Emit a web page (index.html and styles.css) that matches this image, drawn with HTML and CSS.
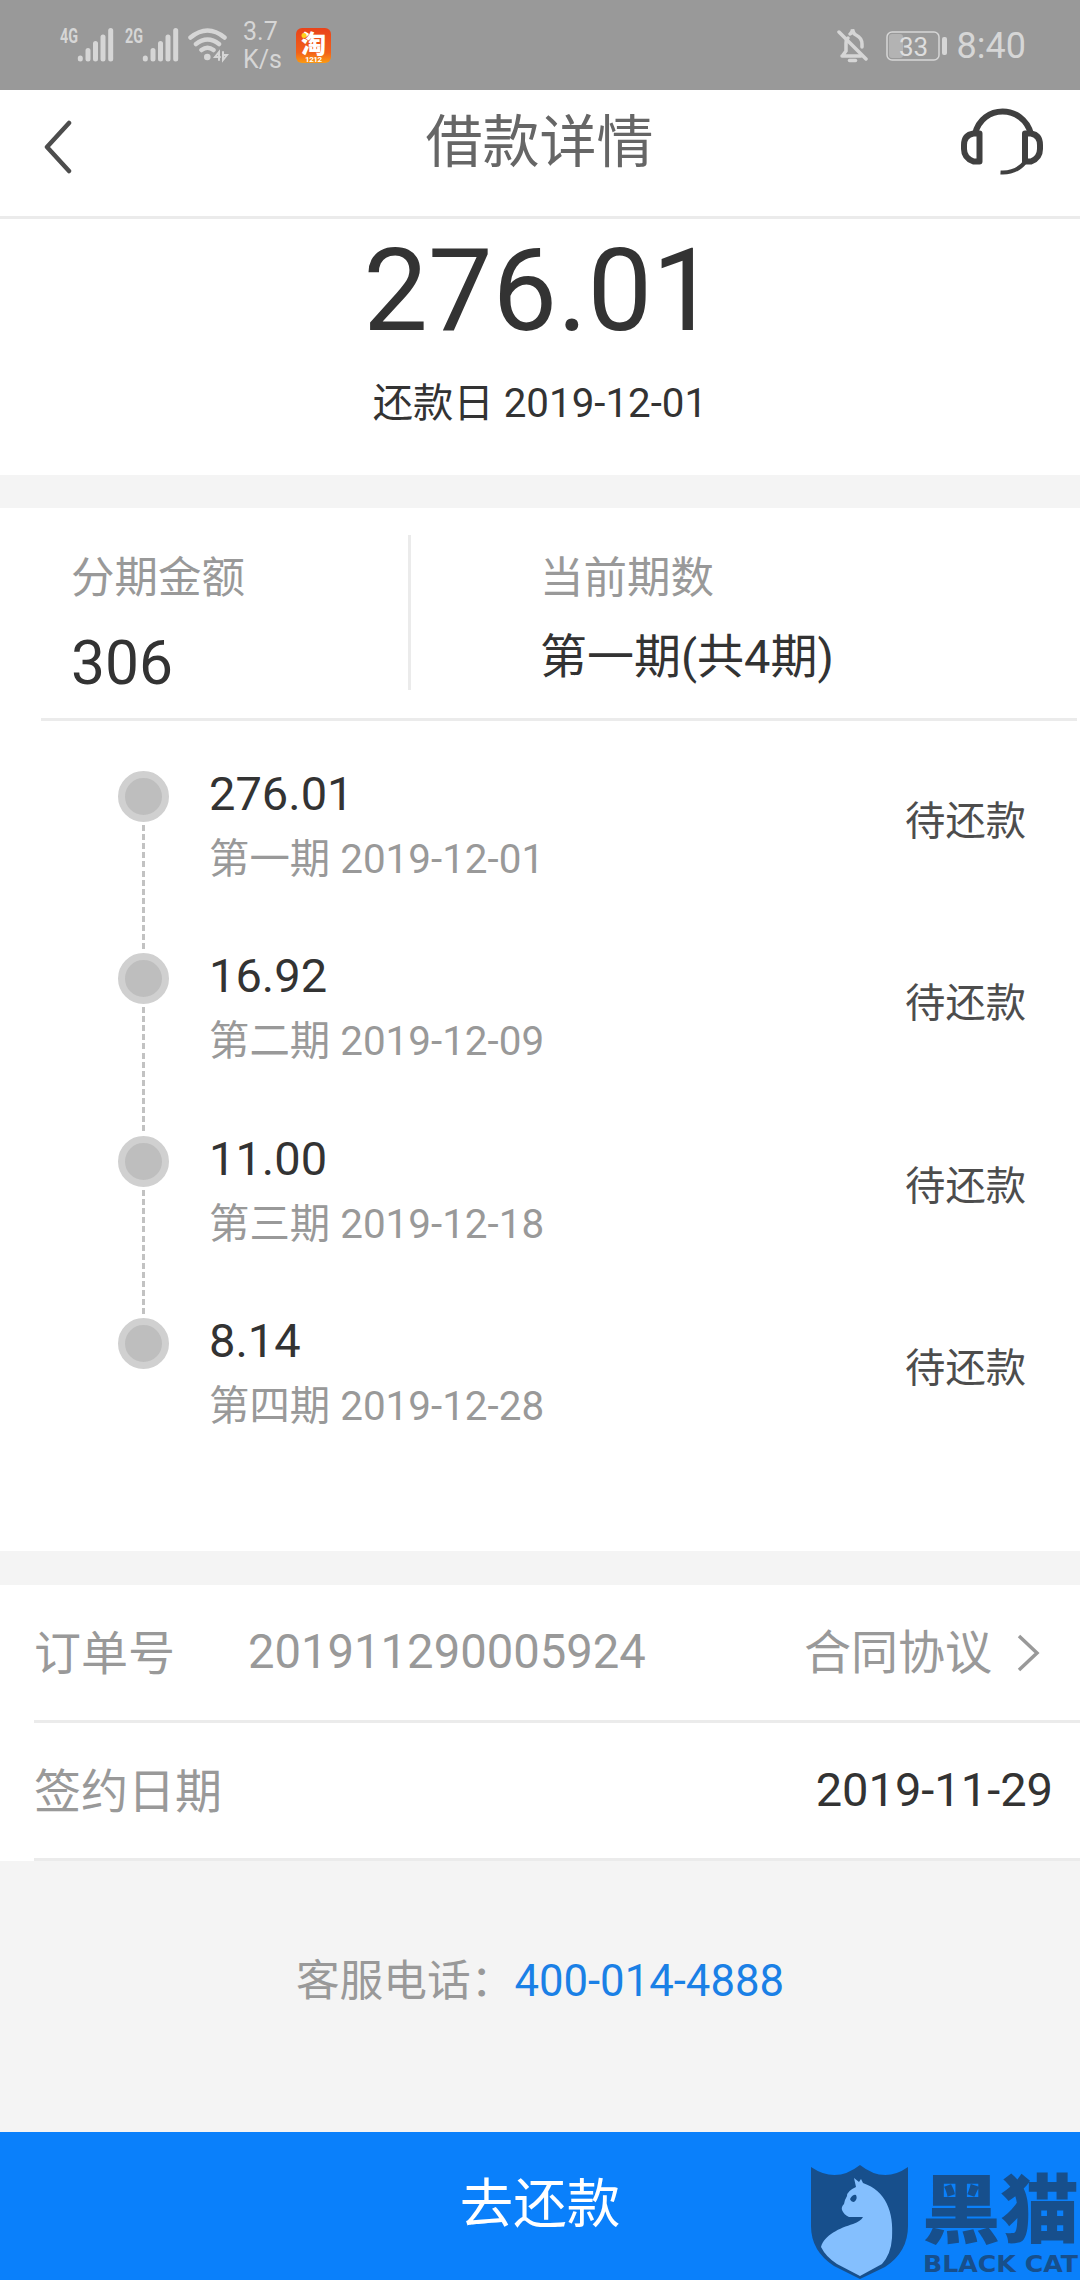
FILE: index.html
```html
<!DOCTYPE html>
<html lang="zh-CN">
<head>
    <meta charset="UTF-8">
    <meta name="viewport" content="width=device-width, initial-scale=1.0">
    <title>借款详情</title>
    <link rel="stylesheet" href="styles.css">
</head>
<body>
    <div class="status-bar">
        <svg class="signal" width="57" height="40" viewBox="0 0 57 40">
            <text class="net" x="2" y="18" textLength="18" lengthAdjust="spacingAndGlyphs">4G</text>
            <path d="M22.3 33v1M30 25.5v8.500M37.500 18.500v15.500M45 12v22M52.700 5.500v28.500"/>
        </svg>
        <svg class="signal" width="57" height="40" viewBox="0 0 57 40">
            <text class="net" x="2" y="18" textLength="18" lengthAdjust="spacingAndGlyphs">2G</text>
            <path d="M22.3 33v1M30 25.5v8.500M37.500 18.500v15.500M45 12v22M52.700 5.500v28.500"/>
        </svg>
        <svg class="wifi" width="42" height="40" viewBox="0 0 42 40">
            <path d="M3.500 12.500Q20.500-1.500 37.500 12.500M9 19Q20.500 10 32 19M14.500 25Q20.500 20.500 26.500 25"/>
            <circle cx="20.300" cy="32" r="3.300"/>
            <path class="arrows" d="M32 35v-8l-4 5h5M36 27v8l4-5h-4"/>
        </svg>
        <div class="speed">3.7<br>K/s</div>
        <svg class="taobao" width="35" height="35" viewBox="0 0 35 35">
            <defs>
                <linearGradient id="tb" x1="0" y1="0" x2="0" y2="1">
                    <stop offset="0" stop-color="#e9431a"/>
                    <stop offset="0.7" stop-color="#f2601a"/>
                    <stop offset="1" stop-color="#fb9a12"/>
                </linearGradient>
            </defs>
            <rect width="35" height="35" rx="6" fill="url(#tb)"/>
            <text class="tb-name" x="5" y="24.500">淘</text>
            <circle cx="8" cy="7.500" r="2.500" fill="#ffd21e"/>
            <text class="tb-date" x="9" y="34" textLength="17">1212</text>
        </svg>
        <svg class="bell" width="32" height="36" viewBox="0 0 32 36">
            <path d="M5 28H24M6 27l3-4V15q0-3 2-5M13 6q2-1 2.500-4.500Q16.500 6 19 7q6 3 6 9v3" />
            <path d="M2 4L29 31"/>
            <path d="M12.500 32.500h6"/>
        </svg>
        <svg class="battery" width="62" height="30" viewBox="0 0 62 30">
            <rect class="level" x="3" y="3" width="14" height="24" rx="3"/>
            <rect class="case" x="1" y="1" width="52" height="28" rx="5"/>
            <rect class="nub" x="56" y="6" width="5" height="18" rx="2"/>
            <text x="27.500" y="24.500" text-anchor="middle">33</text>
        </svg>
        <div class="clock">8:40</div>
    </div>

    <header class="header">
        <svg class="back" width="30" height="54" viewBox="0 0 30 54">
            <path d="M27 3L5 27l22 24"/>
        </svg>
        <h1>借款详情</h1>
        <svg class="headset" width="82" height="68" viewBox="0 0 82 68">
            <path class="band" d="M14 27C21-3 62-3 70 27"/>
            <path d="M18.500 26.500h-6Q3 28 3 38v4q0 9 9.500 12.500h6z"/>
            <path d="M64 26.500h6Q79 28 79 38v4q0 9-9 12.500h-6z"/>
            <path class="mic" d="M39.500 65.500q16 1 25-11"/>
        </svg>
    </header>

    <section class="summary">
        <div class="total">276.01</div>
        <div class="due">还款日 2019-12-01</div>
    </section>

    <section class="plan">
        <div class="plan-head">
            <div class="plan-cell">
                <div class="label">分期金额</div>
                <div class="principal">306</div>
            </div>
            <div class="divider"></div>
            <div class="plan-cell">
                <div class="label">当前期数</div>
                <div class="term">第一期(共4期)</div>
            </div>
        </div>
        <ul class="timeline">
            <li>
                <div class="marker"><span class="dot"></span><span class="dash"></span></div>
                <div class="info">
                    <div class="money">276.01</div>
                    <div class="date">第一期 2019-12-01</div>
                </div>
                <div class="state">待还款</div>
            </li>
            <li>
                <div class="marker"><span class="dot"></span><span class="dash"></span></div>
                <div class="info">
                    <div class="money">16.92</div>
                    <div class="date">第二期 2019-12-09</div>
                </div>
                <div class="state">待还款</div>
            </li>
            <li>
                <div class="marker"><span class="dot"></span><span class="dash"></span></div>
                <div class="info">
                    <div class="money">11.00</div>
                    <div class="date">第三期 2019-12-18</div>
                </div>
                <div class="state">待还款</div>
            </li>
            <li>
                <div class="marker"><span class="dot"></span></div>
                <div class="info">
                    <div class="money">8.14</div>
                    <div class="date">第四期 2019-12-28</div>
                </div>
                <div class="state">待还款</div>
            </li>
        </ul>
    </section>

    <section class="order">
        <div class="row">
            <span class="key">订单号</span>
            <span class="number">201911290005924</span>
            <a class="contract">合同协议
                <svg width="24" height="40" viewBox="0 0 24 40"><path d="M2 3l18 17L2 37"/></svg>
            </a>
        </div>
        <div class="row">
            <span class="key">签约日期</span>
            <span class="value">2019-11-29</span>
        </div>
    </section>

    <div class="service">客服电话：<a class="phone">400-014-4888</a></div>

    <footer class="pay">
        去还款
        <svg class="watermark" width="270" height="118" viewBox="0 0 270 118">
            <path class="shield" d="M1 5Q26 22 50 3Q74 22 98 5V64Q98 90 75 105L50 117L24 104Q1 89 1 64Z"/>
            <path class="cat" d="M44 16l5 4 2-3 2 4C76 29 84 50 82 76Q81 92 72 102L50 114L27 102Q16 95 11 85C14 73 30 66 43 62Q51 59 53 55L39 55Q34 53 32 48Q31 45 34 42Q35 37 37 34Q37 29 46 25Z"/>
            <path class="shield" d="M40 37q3-5 6-4q2 4-2 7q-3 0-4-3z"/>
            <text class="wm-cn" x="112" y="75" textLength="157" lengthAdjust="spacingAndGlyphs">黑猫</text>
            <text class="wm-en" x="113" y="110" textLength="155" lengthAdjust="spacingAndGlyphs">BLACK CAT</text>
        </svg>
    </footer>
</body>
</html>
```
FILE: styles.css
```css
* { box-sizing: border-box; }
body {
    margin: 0;
    width: 1080px;
    height: 2280px;
    display: flex;
    flex-direction: column;
    background: #f4f4f4;
    color: #333;
    font-family: Roboto, "Noto Sans CJK SC", sans-serif;
    overflow: hidden;
}
svg { display: block; flex: none; fill: none; }

/* system status bar */
.status-bar {
    height: 90px;
    flex: none;
    display: flex;
    align-items: flex-start;
    padding: 25px 54px 0 58px;
    background: #999;
    color: #d6d6d6;
}
.signal { margin-right: 8px; }
.signal path { stroke: #d6d6d6; stroke-width: 5; stroke-linecap: round; }
.net { font: bold 20px Roboto, sans-serif; fill: #d6d6d6; }
.wifi { margin-left: -1px; }
.wifi path { stroke: #d6d6d6; stroke-width: 4.5; stroke-linecap: round; }
.wifi circle { fill: #d6d6d6; }
.wifi .arrows { stroke-width: 2; }
.speed {
    width: 53px;
    margin: -7px 0 0 14px;
    font-size: 25px;
    line-height: 28px;
}
.taobao { margin-top: 3px; }
.tb-name { font: 900 25px "Noto Sans CJK SC", sans-serif; fill: #fff; }
.tb-date { font: bold 8px Roboto, sans-serif; fill: #fff; }
.bell { margin: 3px 17px 0 auto; }
.bell path { stroke: #d6d6d6; stroke-width: 3.5; stroke-linecap: round; }
.battery { margin: 6px 9px 0 0; }
.battery .level { fill: #b3b3b3; }
.battery .case { stroke: #d6d6d6; stroke-width: 1.5; }
.battery .nub { fill: #d6d6d6; }
.battery text { font: 26px Roboto, sans-serif; fill: #dedede; }
.clock { font-size: 36px; line-height: 43px; }

.header {
    height: 129px;
    flex: none;
    display: flex;
    align-items: flex-start;
    justify-content: space-between;
    padding: 18px 37px 0 42px;
    background: #fff;
    border-bottom: 3px solid #ebebeb;
}
.back { margin: 12px 46px 0 0; }
.back path { stroke: #4d4d4d; stroke-width: 4.5; stroke-linecap: round; stroke-linejoin: round; }
.header h1 {
    margin: 0;
    font-size: 57px;
    font-weight: 400;
    line-height: 70px;
    color: #666;
}
.headset { margin-top: -1px; }
.headset path { stroke: #404040; stroke-width: 6; stroke-linejoin: round; }
.headset .mic { stroke-width: 4; }

.summary {
    height: 256px;
    flex: none;
    padding-top: 12px;
    background: #fff;
    text-align: center;
}
.total { font-size: 115px; line-height: 120px; }
.due { margin-top: 28px; font-size: 40.3px; line-height: 50px; }

.plan {
    height: 1043px;
    flex: none;
    margin-top: 33px;
    background: #fff;
}
.plan-head {
    height: 213px;
    display: grid;
    grid-template-columns: 337px 3px 1fr;
    margin: 0 3px 0 41px;
    padding-left: 30px;
    border-bottom: 3px solid #ebebeb;
}
.plan-cell { padding-top: 46px; }
.divider { height: 155px; margin-top: 27px; background: #ebebeb; }
.divider + .plan-cell { padding-left: 129px; }
.label { font-size: 43.5px; line-height: 50px; color: #999; }
.principal { margin-top: 30px; font-size: 60.5px; line-height: 60px; }
.term { margin-top: 28px; font-size: 47px; line-height: 50px; }

.timeline {
    margin: 0;
    padding: 50px 54px 0 118px;
    list-style: none;
}
.timeline li { display: flex; height: 182.25px; }
.marker {
    width: 51px;
    display: flex;
    flex-direction: column;
    align-items: center;
}
.dot {
    width: 51px;
    height: 51px;
    flex: none;
    border: 7px solid #d0d0d0;
    border-radius: 50%;
    background: #bebebe;
}
.dash {
    width: 3px;
    height: 124px;
    margin-top: 3px;
    background: repeating-linear-gradient(#c2c2c2 0 6px, transparent 6px 9.1px);
}
.info { flex: 1; padding-left: 40px; }
.money { font-size: 47px; line-height: 46px; }
.date { margin-top: 20px; font-size: 40.4px; line-height: 46px; color: #999; }
.state { margin-top: 26px; font-size: 40.3px; line-height: 50px; color: #4d4d4d; }

.order {
    flex: none;
    margin-top: 34px;
    padding-left: 34px;
    background: #fff;
}
.row {
    height: 138px;
    display: flex;
    align-items: center;
    font-size: 47px;
    line-height: 60px;
    color: #999;
    border-bottom: 3px solid #ebebeb;
}
.key { padding-top: 2px; }
.number { margin-left: 73px; font-size: 47.2px; }
.contract {
    display: flex;
    align-items: center;
    gap: 25px;
    margin: 0 39px 0 auto;
    padding-top: 1px;
}
.contract path { stroke: #999; stroke-width: 3.5; }
.value { margin: 0 27px 0 auto; color: #333; }
.number, .value { padding-bottom: 2px; }

.service {
    flex: none;
    margin-top: 90px;
    text-align: center;
    font-size: 43.7px;
    line-height: 60px;
    color: #999;
}
.phone { color: #1a80e6; }

.pay {
    position: relative;
    height: 148px;
    flex: none;
    margin-top: auto;
    background: #0a80fb;
    color: #fff;
    font-size: 53.5px;
    line-height: 145px;
    text-align: center;
}
.watermark { position: absolute; right: 0; bottom: 0; }
.shield { fill: #174f8c; }
.cat { fill: #84bffe; }
.wm-cn { font: 900 75px "Noto Sans CJK SC", sans-serif; fill: #174f8c; }
.wm-en { font: bold 23px "DejaVu Sans", sans-serif; fill: #174f8c; }
```
